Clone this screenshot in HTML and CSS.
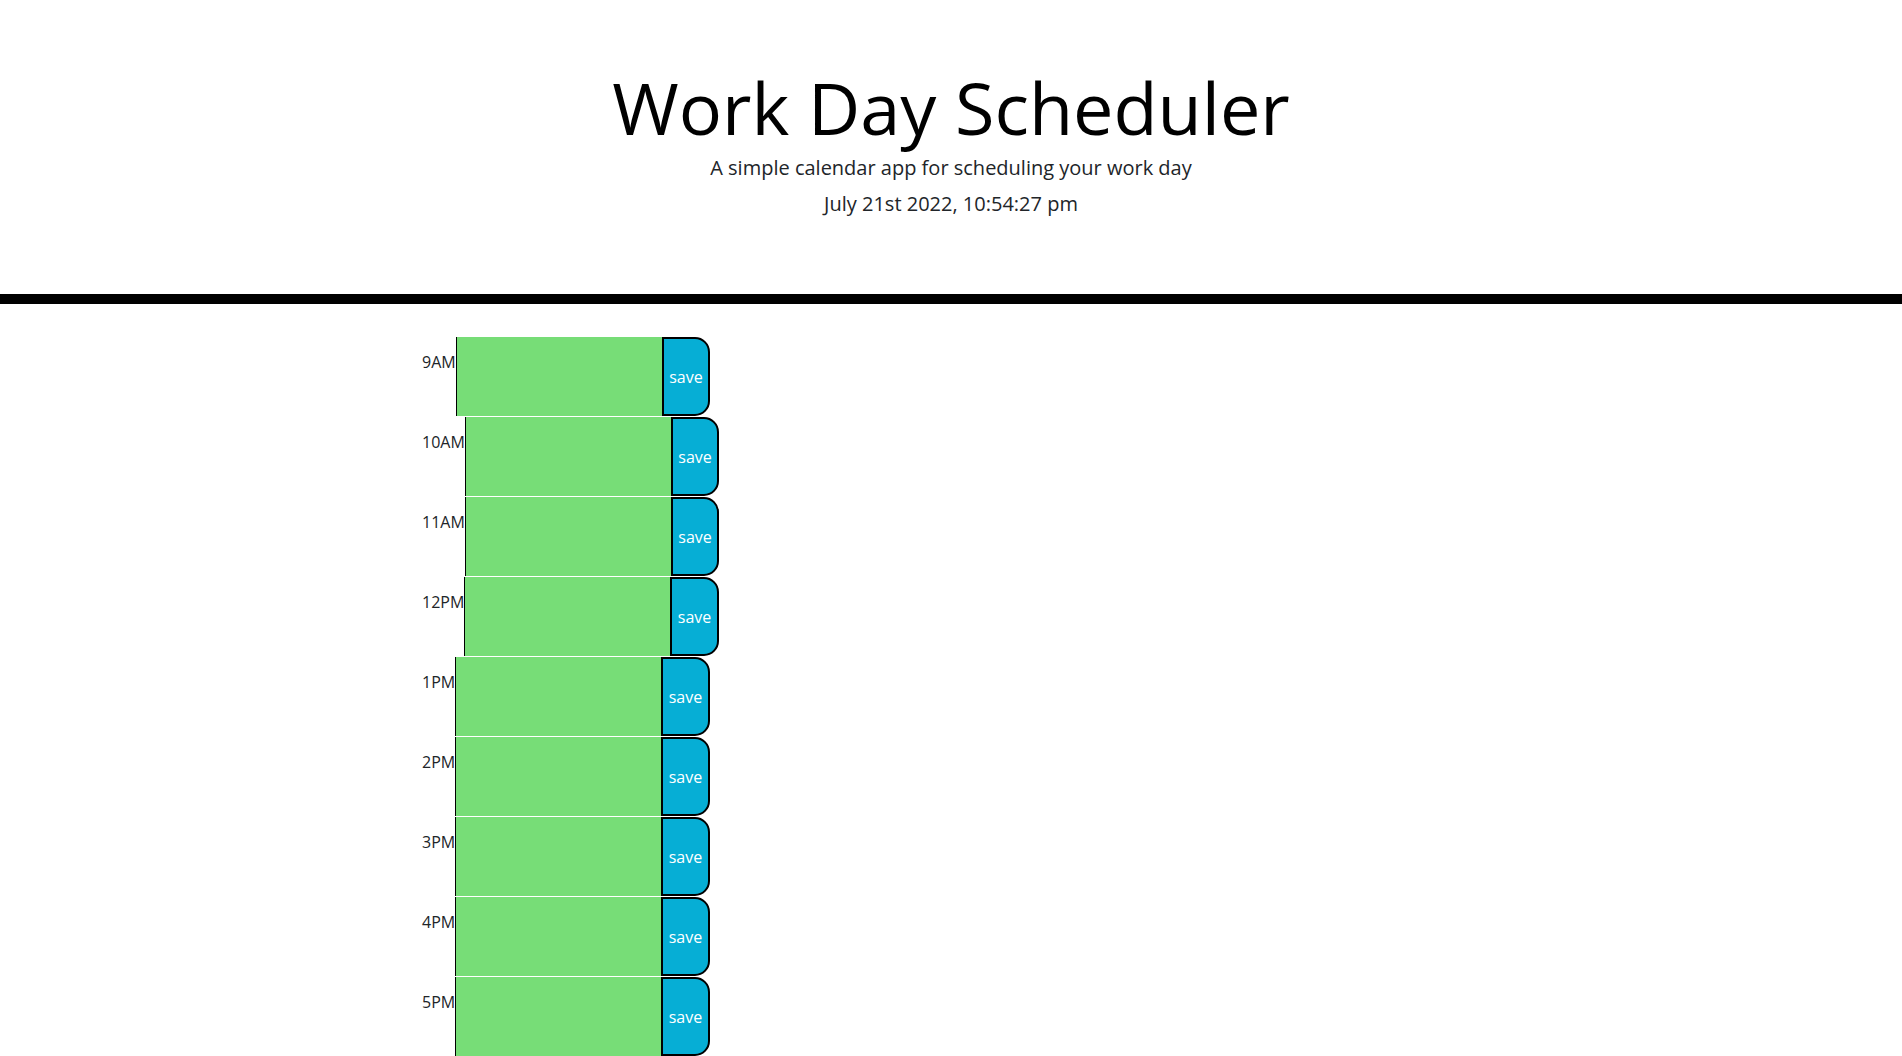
FILE: index.html
```html
<!DOCTYPE html>
<html lang="en">
<head>
<meta charset="UTF-8">
<title>Work Day Scheduler</title>
<link rel="stylesheet" href="styles.css">
</head>
<body>
<header class="jumbotron">
  <h1 class="display">Work Day Scheduler</h1>
  <p class="lead">A simple calendar app for scheduling your work day</p>
  <p class="lead" id="currentDay">July 21st 2022, 10:54:27 pm</p>
</header>
<main class="schedule">
  <div class="row"><div class="hour">9AM</div><textarea class="description future"></textarea><button class="saveBtn">save</button></div>
  <div class="row"><div class="hour">10AM</div><textarea class="description future"></textarea><button class="saveBtn">save</button></div>
  <div class="row"><div class="hour">11AM</div><textarea class="description future"></textarea><button class="saveBtn">save</button></div>
  <div class="row"><div class="hour">12PM</div><textarea class="description future"></textarea><button class="saveBtn">save</button></div>
  <div class="row"><div class="hour">1PM</div><textarea class="description future"></textarea><button class="saveBtn">save</button></div>
  <div class="row"><div class="hour">2PM</div><textarea class="description future"></textarea><button class="saveBtn">save</button></div>
  <div class="row"><div class="hour">3PM</div><textarea class="description future"></textarea><button class="saveBtn">save</button></div>
  <div class="row"><div class="hour">4PM</div><textarea class="description future"></textarea><button class="saveBtn">save</button></div>
  <div class="row"><div class="hour">5PM</div><textarea class="description future"></textarea><button class="saveBtn">save</button></div>
</main>
</body>
</html>
```
FILE: styles.css
```css
* {
  box-sizing: border-box;
}

html, body {
  overflow: hidden;
}

body {
  margin: 0;
  font-family: "Open Sans", "Noto Sans", sans-serif;
  line-height: 1;
  color: #212529;
  background: #ffffff;
}

.jumbotron {
  text-align: center;
  color: #000000;
  padding: 64px 32px;
  margin-bottom: 32px;
  border-bottom: 10px solid #000000;
}

.display {
  margin: 0 0 8px;
  font-size: 72px;
  font-weight: 400;
  line-height: 1.2;
}

.lead {
  margin: 0 0 16px;
  font-size: 20px;
  font-weight: 400;
  line-height: 1;
  color: #212529;
}

.schedule {
  padding-left: 422px;
}

.row {
  display: flex;
  height: 80px;
  border-top: 1px solid #ffffff;
}

.hour {
  padding-top: 17px;
  font-size: 16px;
  line-height: 1;
  color: #212529;
}

.description {
  width: 206px;
  height: 79px;
  margin: 0;
  padding: 10px;
  background: transparent;
  border: none;
  border-left: 1px solid #000000;
  resize: none;
  color: #000000;
}

.future {
  background-color: #77dd77;
}

.saveBtn {
  height: 79px;
  margin: 0;
  padding: 0 5.5px;
  border: 2px solid #000000;
  border-radius: 0 15px 15px 0;
  background-color: #06aed5;
  color: #ffffff;
  font-family: "Open Sans", "Noto Sans", sans-serif;
  font-size: 16px;
}
```
